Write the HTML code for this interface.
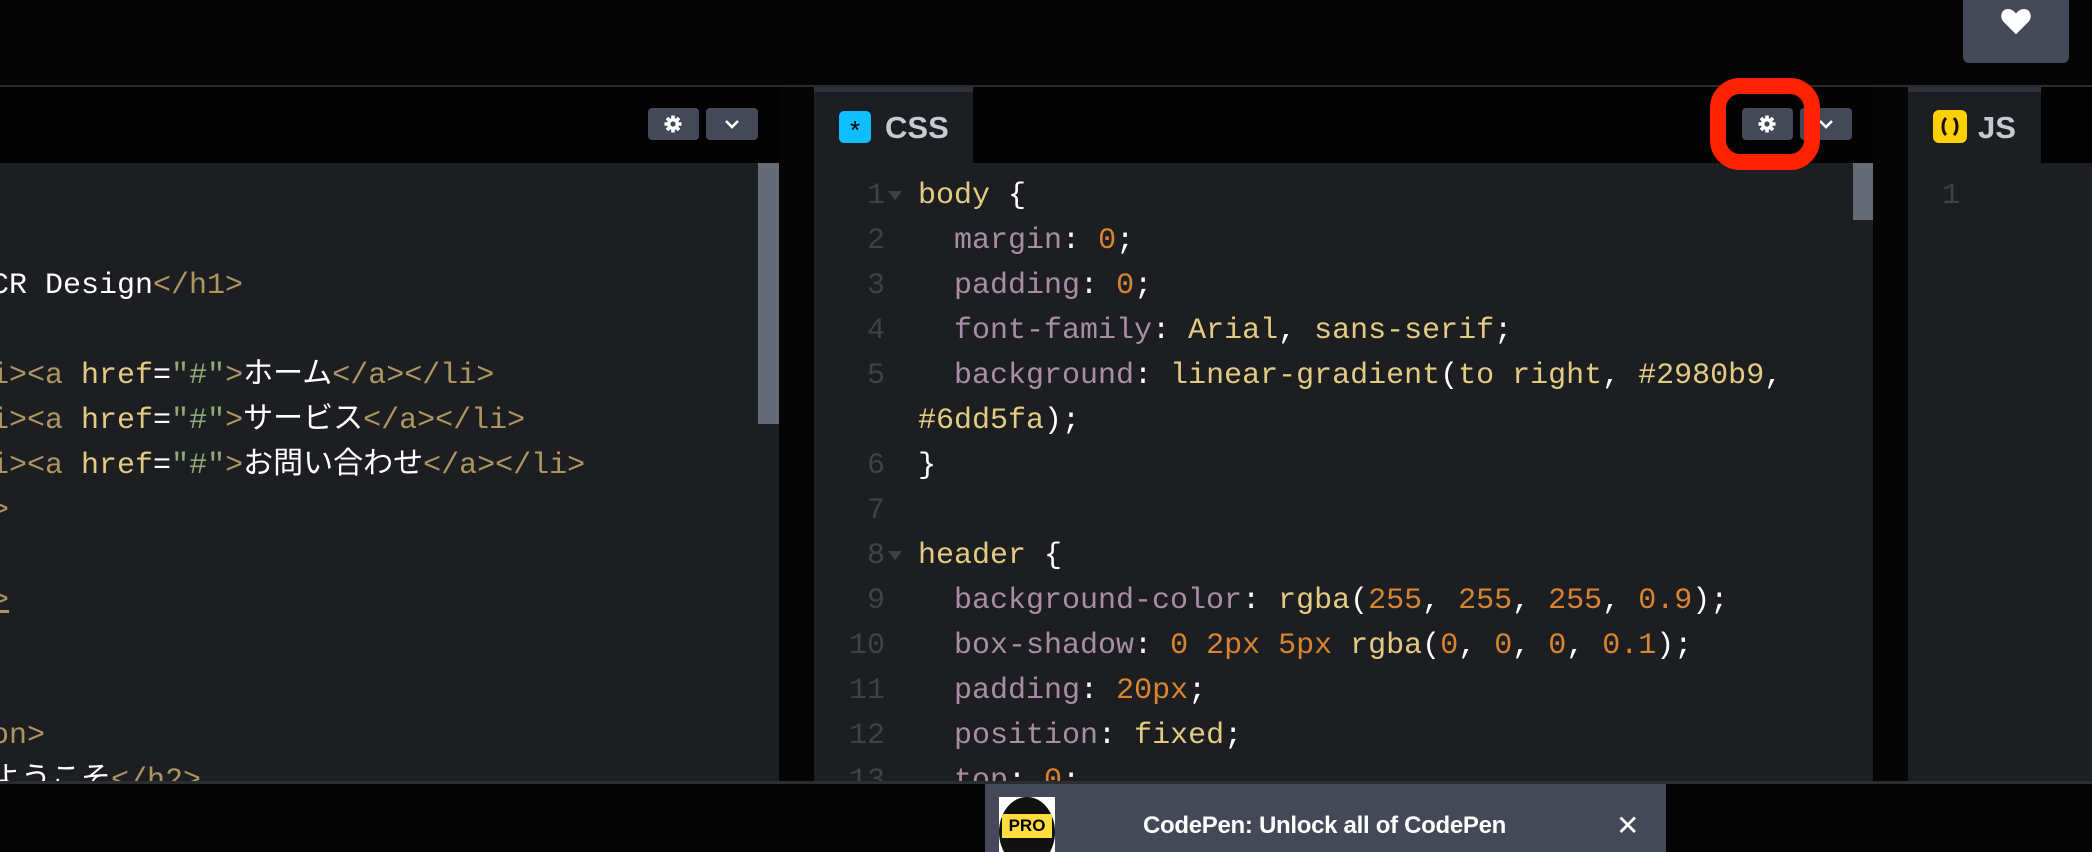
<!DOCTYPE html>
<html><head><meta charset="utf-8"><style>
*{margin:0;padding:0;box-sizing:border-box}
body{width:2092px;height:852px;background:#050505;position:relative;overflow:hidden;font-family:"Liberation Sans","Noto Sans CJK JP",sans-serif}
.a{position:absolute}
.code{font-family:"Liberation Mono","Noto Sans CJK JP",monospace;font-size:30px;line-height:45px;white-space:pre;color:#fff}
.tag{color:#ac9560}.at{color:#e3cc82}.st{color:#8fa876}.pr{color:#a88ea3}.v{color:#e3cc82}.n{color:#d88430}.ln{color:#3f4148}
.btn{background:#444857;border-radius:4px;height:32px}
</style></head><body>
<div class="a" style="left:0;top:85px;width:2092px;height:2px;background:#2a2b30"></div>
<div class="a btn" style="left:1963px;top:0;width:106px;height:63px;border-radius:0 0 6px 6px"></div>
<svg class="a" style="left:2000px;top:6px" width="32" height="30" viewBox="0 0 24 22"><path d="M12 21 L2.5 11.5 C-0.5 8 1 2 6 2 C9 2 11 4 12 5.5 C13 4 15 2 18 2 C23 2 24.5 8 21.5 11.5 Z" fill="#fff"/></svg>

<svg width="0" height="0" style="position:absolute"><defs><g id="gear"><circle cx="10" cy="10" r="6" fill="#fff"/><g stroke="#fff" stroke-width="3.6"><line x1="10" y1="1.5" x2="10" y2="18.5"/><line x1="1.5" y1="10" x2="18.5" y2="10"/><line x1="4" y1="4" x2="16" y2="16"/><line x1="16" y1="4" x2="4" y2="16"/></g><circle cx="10" cy="10" r="2.6" fill="#444857"/></g></defs></svg>

<!-- left panel -->
<div class="a" style="left:0;top:87px;width:779px;height:76px;background:#030303"></div>
<div class="a" style="left:0;top:163px;width:779px;height:619px;background:#1d1e22"></div>
<div class="a" style="left:758px;top:163px;width:21px;height:261px;background:#656a77"></div>
<div class="a btn" style="left:648px;top:108px;width:51px"></div>
<div class="a btn" style="left:706px;top:108px;width:52px"></div>
<svg class="a" style="left:663px;top:114px" width="20" height="20" viewBox="0 0 20 20"><use href="#gear"/></svg>
<svg class="a" style="left:722px;top:116px" width="20" height="16" viewBox="0 0 20 16"><path d="M4 5 L10 11 L16 5" stroke="#fff" stroke-width="2.6" fill="none"/></svg>
<div class="a code" style="left:-9px;top:174px">

CR Design<span class="tag">&lt;/h1&gt;</span>

<span class="tag">i&gt;&lt;a</span> <span class="at">href</span>=<span class="st">"#"</span><span class="tag">&gt;</span>ホーム<span class="tag">&lt;/a&gt;&lt;/li&gt;</span>
<span class="tag">i&gt;&lt;a</span> <span class="at">href</span>=<span class="st">"#"</span><span class="tag">&gt;</span>サービス<span class="tag">&lt;/a&gt;&lt;/li&gt;</span>
<span class="tag">i&gt;&lt;a</span> <span class="at">href</span>=<span class="st">"#"</span><span class="tag">&gt;</span>お問い合わせ<span class="tag">&lt;/a&gt;&lt;/li&gt;</span>
<span class="tag">&gt;</span>

<span class="tag" style="text-decoration:underline">&gt;</span>


<span class="tag">on&gt;</span>
ようこそ<span class="tag">&lt;/h2&gt;</span></div>

<!-- css panel -->
<div class="a" style="left:814px;top:87px;width:1059px;height:76px;background:#030303"></div>
<div class="a" style="left:814px;top:87px;width:159px;height:76px;background:#1d1e22;border-top:5px solid #2f3138"></div>
<div class="a" style="left:839px;top:111px;width:32px;height:32px;background:#0ebeff;border-radius:5px;color:#000;font-size:26px;text-align:center;line-height:38px">*</div>
<div class="a" style="left:885px;top:110px;font-size:31px;font-weight:bold;color:#c7c9d3">CSS</div>
<div class="a" style="left:814px;top:163px;width:1059px;height:619px;background:#1d1e22"></div>
<div class="a" style="left:1853px;top:163px;width:20px;height:57px;background:#656a77"></div>
<div class="a btn" style="left:1742px;top:108px;width:51px"></div>
<div class="a btn" style="left:1800px;top:108px;width:52px"></div>
<svg class="a" style="left:1757px;top:114px" width="20" height="20" viewBox="0 0 20 20"><use href="#gear"/></svg>
<svg class="a" style="left:1816px;top:116px" width="20" height="16" viewBox="0 0 20 16"><path d="M4 5 L10 11 L16 5" stroke="#fff" stroke-width="2.6" fill="none"/></svg>
<div class="a" style="left:1710px;top:78px;width:110px;height:92px;border:16px solid #ff2200;border-radius:30px"></div>
<div class="a code ln" style="left:835px;top:174px;text-align:right;width:50px"> 1
 2
 3
 4
 5

 6
 7
 8
 9
10
11
12
13</div>
<div class="a" style="left:888px;top:191px;border-left:7px solid transparent;border-right:7px solid transparent;border-top:9px solid #3f4148"></div>
<div class="a" style="left:888px;top:551px;border-left:7px solid transparent;border-right:7px solid transparent;border-top:9px solid #3f4148"></div>
<div class="a code" style="left:918px;top:174px"><span class="v">body</span> {
  <span class="pr">margin</span>: <span class="n">0</span>;
  <span class="pr">padding</span>: <span class="n">0</span>;
  <span class="pr">font-family</span>: <span class="v">Arial</span>, <span class="v">sans-serif</span>;
  <span class="pr">background</span>: <span class="v">linear-gradient</span>(<span class="v">to right</span>, <span class="v">#2980b9</span>,
<span class="v">#6dd5fa</span>);
}

<span class="v">header</span> {
  <span class="pr">background-color</span>: <span class="v">rgba</span>(<span class="n">255</span>, <span class="n">255</span>, <span class="n">255</span>, <span class="n">0.9</span>);
  <span class="pr">box-shadow</span>: <span class="n">0</span> <span class="n">2px</span> <span class="n">5px</span> <span class="v">rgba</span>(<span class="n">0</span>, <span class="n">0</span>, <span class="n">0</span>, <span class="n">0.1</span>);
  <span class="pr">padding</span>: <span class="n">20px</span>;
  <span class="pr">position</span>: <span class="v">fixed</span>;
  <span class="pr">top</span>: <span class="n">0</span>;</div>

<!-- js panel -->
<div class="a" style="left:1908px;top:87px;width:184px;height:76px;background:#030303"></div>
<div class="a" style="left:1908px;top:87px;width:133px;height:76px;background:#1d1e22;border-top:5px solid #2f3138"></div>
<div class="a" style="left:1933px;top:110px;width:34px;height:33px;background:#ffd000;border-radius:6px"></div>
<svg class="a" style="left:1933px;top:110px" width="34" height="33" viewBox="0 0 34 33"><path d="M13 8 C9 12 9 21 13 25" stroke="#111" stroke-width="3" fill="none"/><path d="M21 8 C25 12 25 21 21 25" stroke="#111" stroke-width="3" fill="none"/></svg>
<div class="a" style="left:1978px;top:110px;font-size:31px;font-weight:bold;color:#c7c9d3">JS</div>
<div class="a" style="left:1908px;top:163px;width:184px;height:619px;background:#1d1e22"></div>
<div class="a code ln" style="left:1942px;top:174px">1</div>

<!-- bottom -->
<div class="a" style="left:0;top:781px;width:2092px;height:71px;background:#050505;border-top:3px solid #2c2d31"></div>
<div class="a" style="left:985px;top:784px;width:681px;height:68px;background:#444857"></div>
<div class="a" style="left:999px;top:797px;width:56px;height:55px;background:#fff;overflow:hidden"><div style="position:absolute;left:0;top:0;width:56px;height:70px;border-radius:50%;background:#111"></div><div style="position:absolute;left:3px;top:17px;width:50px;height:24px;background:#ffdd40;color:#000;font-weight:bold;font-size:17px;text-align:center;line-height:24px">PRO</div></div>
<div class="a" style="left:1143px;top:812px;font-size:24px;font-weight:bold;color:#fff;letter-spacing:-0.3px">CodePen: Unlock all of CodePen</div>
<div class="a" style="left:1616px;top:809px;font-size:28px;color:#fff">✕</div>
</body></html>
